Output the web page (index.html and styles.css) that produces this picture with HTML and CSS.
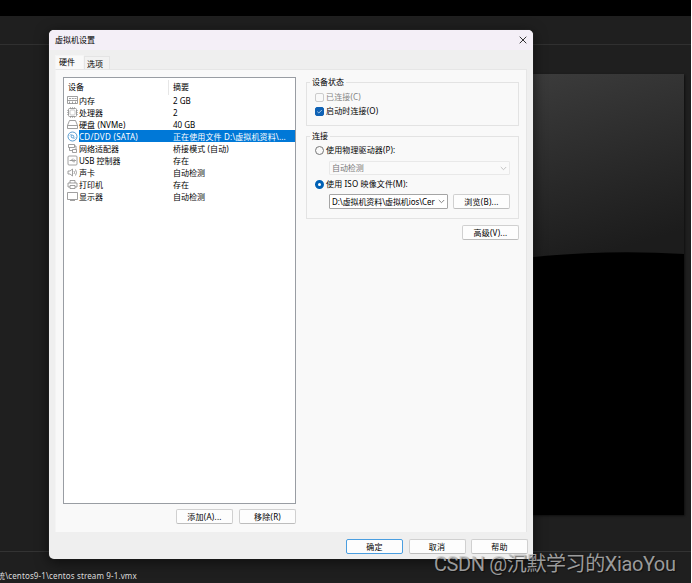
FILE: index.html
```html
<!DOCTYPE html>
<html lang="zh-CN">
<head>
<meta charset="utf-8">
<title>虚拟机设置</title>
<link rel="stylesheet" href="styles.css">
</head>
<body>
<div class="desktop">
  <div class="menubar"></div>
  <div class="toolbar"></div>
  <div class="workspace">
    <div class="preview">
      <svg width="160" height="442" viewBox="0 0 160 442">
        <defs><linearGradient id="sky" x1="0.1" y1="0" x2="0.35" y2="1"><stop offset="0" stop-color="#3b3b3b"/><stop offset="1" stop-color="#1c1c1c"/></linearGradient></defs>
        <rect width="160" height="186" fill="url(#sky)"/>
        <path d="M0 184Q80 175 160 180V442H0Z" fill="#000"/>
      </svg>
    </div>
  </div>
  <div class="statusbar"><span class="path">统\centos9-1\centos stream 9-1.vmx</span></div>
</div>

<div class="dialog">
  <div class="titlebar"><span class="title">虚拟机设置</span>
    <svg class="close" width="8" height="8" viewBox="0 0 8 8"><path d="M.7.7 7.3 7.3M7.3.7.7 7.3" stroke="#333" stroke-width="1"/></svg>
  </div>
  <div class="tabs"><div class="tab active">硬件</div><div class="tab">选项</div></div>
  <div class="panel">
    <div class="left">
      <div class="list">
        <div class="row head"><span class="name">设备</span><span class="value">摘要</span></div>
        <div class="row"><svg class="ico" viewBox="0 0 11 11"><path d="M.5 1.500h10v7H.5zM.5 5.500h10M2 3.500h2M4.800 3.500h2M7.500 3.500h2M2.500 6.500v2M5.500 6.500v2M8.500 6.500v2"/></svg><span class="name">内存</span><span class="value">2 GB</span></div>
        <div class="row"><svg class="ico" viewBox="0 0 11 11"><rect x="1.500" y="1.500" width="8" height="8" rx="1"/><rect x="3" y="3" width="5" height="5" rx="1" stroke="#bbb"/><path d="M3.500.3v1M5.500.3v1M7.500.3v1M3.500 9.700v1M5.500 9.700v1M7.500 9.700v1M.3 3.500h1M.3 5.500h1M.3 7.500h1M9.700 3.500h1M9.700 5.500h1M9.700 7.500h1"/></svg><span class="name">处理器</span><span class="value">2</span></div>
        <div class="row"><svg class="ico" viewBox="0 0 11 11"><path d="M2.500 1.500h6l2 5v3H.5v-3zM.5 6.500h10"/></svg><span class="name spaced">硬盘 (NVMe)</span><span class="value">40 GB</span></div>
        <div class="row selected"><svg class="ico disc" viewBox="0 0 11 11"><circle cx="5.500" cy="5.500" r="4.500"/><circle cx="5.500" cy="5.500" r="1.300"/><path d="M3 4.500 4.500 3M6.500 8 8 6.500"/></svg><span class="name wide">CD/DVD (SATA)</span><span class="value summary">正在使用文件 D:\虚拟机资料\...</span></div>
        <div class="row"><svg class="ico" viewBox="0 0 11 11"><path d="M1.500 1.500h6v3h-6zM5.500 6.500h4v3h-4zM2.500 4.500v3h3M7.500 3H9v3.500"/></svg><span class="name">网络适配器</span><span class="value spaced">桥接模式 (自动)</span></div>
        <div class="row"><svg class="ico" viewBox="0 0 11 11"><rect x="1" y="1" width="9" height="9" rx="1"/><path d="M2.500 5.500h6M4 5.500 5.500 4h1M5 5.500 6.500 7h1M7.500 4.500l1 1-1 1"/></svg><span class="name">USB 控制器</span><span class="value">存在</span></div>
        <div class="row"><svg class="ico" viewBox="0 0 11 11"><path d="M1 4h2l2.500-2v7L3 7H1zM7 4q1 1.500 0 3M8.500 2.500q2 3 0 6"/></svg><span class="name">声卡</span><span class="value">自动检测</span></div>
        <div class="row"><svg class="ico" viewBox="0 0 11 11"><path d="M3 4V1.500h5V4M3 8H1V4h9v4H8M3 6.500h5v3H3z"/></svg><span class="name">打印机</span><span class="value">存在</span></div>
        <div class="row"><svg class="ico" viewBox="0 0 11 11"><path d="M.5 1.500h10v7H.5zM3 9.500h5"/></svg><span class="name">显示器</span><span class="value">自动检测</span></div>
      </div>
      <div class="buttons"><div class="btn">添加(A)...</div><div class="btn">移除(R)</div></div>
    </div>
    <div class="right">
      <div class="group status"><span class="legend">设备状态</span>
        <div class="line off"><span class="check"></span><span>已连接(C)</span></div>
        <div class="line"><span class="check on"><svg width="7" height="7" viewBox="0 0 7 7"><path d="M1.300 3.600 2.800 5 5.800 2" stroke="#cfe3f6" fill="none" stroke-width=".8"/></svg></span><span>启动时连接(O)</span></div>
      </div>
      <div class="group conn"><span class="legend">连接</span>
        <div class="line"><span class="radio"></span><span>使用物理驱动器(P):</span></div>
        <div class="select disabled"><span class="text">自动检测</span><svg class="chev" viewBox="0 0 7 5"><path d="M.8 1 3.500 3.700 6.200 1"/></svg></div>
        <div class="line"><span class="radio on"></span><span>使用 ISO 映像文件(M):</span></div>
        <div class="file"><div class="select"><span class="text">D:\虚拟机资料\虚拟机ios\Cer</span><svg class="chev" viewBox="0 0 7 5"><path d="M.8 1 3.500 3.700 6.200 1"/></svg></div><div class="btn">浏览(B)...</div></div>
      </div>
      <div class="btn advanced">高级(V)...</div>
    </div>
  </div>
  <div class="footer"><div class="btn primary">确定</div><div class="btn">取消</div><div class="btn">帮助</div></div>
</div>
<div class="watermark">CSDN @沉默学习的XiaoYou</div>
</body>
</html>
```

FILE: styles.css
```css
* { box-sizing: border-box; }
body { margin: 0; width: 692px; height: 583px; overflow: hidden; position: relative; font: 8px/12px "Noto Sans", "Noto Sans CJK SC", sans-serif; color: #000; }
.desktop { width: 691px; height: 583px; display: flex; flex-direction: column; background: #1f1f1f; }
.menubar { height: 16px; background: #000; }
.toolbar { height: 29px; border-bottom: 1px solid #303030; }
.workspace { height: 507px; padding: 29px 7px 0 0; display: flex; justify-content: flex-end; border-bottom: 1px solid #333; }
.preview { width: 160px; height: 441px; overflow: hidden; box-shadow: 1px 1px 2px #0008; }
.preview svg { display: block; }
.statusbar { flex: 1; padding-top: 18px; color: #ddd; white-space: nowrap; }
.path { display: block; margin-left: -3px; letter-spacing: .13px; }
.dialog { position: absolute; left: 49px; top: 30px; width: 484px; height: 529px; border-radius: 5px; overflow: hidden; background: #efefef; box-shadow: 0 3px 14px #0009, 0 0 1px #777; display: flex; flex-direction: column; }
.titlebar { height: 20px; background: #f4eff7; display: flex; justify-content: space-between; align-items: center; padding: 0 6px; }
.close { display: block; }
.tabs { height: 19px; padding: 5px 0 0 6px; display: flex; align-items: flex-end; }
.tab { width: 26px; height: 13px; padding: 1px 0 0 2px; background: #f2f2f2; border: 1px solid #e4e4e4; border-bottom: 0; white-space: nowrap; }
.tab.active { width: 29px; height: 14px; padding: 0 0 0 3px; background: #f9f9f9; border-color: #f5f5f5; }
.panel { margin-left: 6px; width: 472px; height: 463px; background: #f9f9f9; border: 1px solid #e6e6e6; border-left-color: #f4f4f4; border-bottom: 0; display: flex; }
.left { width: 233px; margin: 7px 0 0 7px; }
.list { height: 427px; background: #fff; border: 1px solid #999da3; padding-top: 2px; }
.row { display: flex; align-items: center; height: 12px; padding-left: 3px; white-space: nowrap; }
.row .name { width: 94px; height: 12px; line-height: 13px; }
.row .value { flex: 1; height: 12px; line-height: 13px; }
.row.head { height: 14px; padding-left: 4px; }
.head .name { width: 101px; height: 15px; border-right: 1px solid #e6e6e6; line-height: 14px; }
.head .value { padding-left: 4px; height: 14px; line-height: 14px; }
.row .spaced { letter-spacing: .1px; }
.row .wide { letter-spacing: .3px; }
.row .summary { letter-spacing: .12px; }
.ico { width: 11px; height: 11px; fill: none; stroke: #888; stroke-width: .8; flex: none; margin-right: 1px; }
.disc { stroke: #2e83c4; }
.selected { color: #fff; }
.selected .name, .selected .value { background: #0078d7; }
.buttons { display: flex; justify-content: flex-end; gap: 6px; padding-top: 5px; }
.btn { width: 57px; height: 15px; border: 1px solid #d0d0d0; border-bottom-color: #bdbdbd; border-radius: 2px; background: #fdfdfd; text-align: center; line-height: 14px; letter-spacing: .25px; white-space: nowrap; }
.right { width: 213px; margin: 12px 0 0 10px; }
.group { border: 1px solid #e3e3e3; position: relative; }
.legend { position: absolute; left: 3px; top: -7px; padding: 0 2px; background: #f9f9f9; }
.status { height: 44px; padding: 8px 0 0 8px; }
.status .line + .line { margin-top: 2px; }
.conn { height: 83px; margin-top: 10px; padding: 7px 0 0 8px; }
.line { display: flex; align-items: center; height: 12px; gap: 2px; letter-spacing: .14px; white-space: nowrap; }
.off { color: #858585; }
.check { width: 9px; height: 9px; border: 1px solid #ccc; border-radius: 2px; }
.check.on { background: #0f62b5; border-color: #0f62b5; }
.check svg { display: block; }
.radio { width: 9px; height: 9px; border: 1px solid #777; border-radius: 50%; }
.radio.on { border: 3px solid #0061b5; background: #fff; }
.select { display: flex; align-items: center; justify-content: space-between; height: 15px; border: 1px solid #a5a5a5; border-radius: 1px; background: #fff; padding: 0 2px; white-space: nowrap; }
.select .text { width: 105px; letter-spacing: -.1px; }
.select.disabled { width: 181px; height: 14px; margin: 5px 0 3px 14px; color: #777; background: #fafafa; border-color: #e9e9e9; }
.chev { width: 7px; height: 5px; fill: none; stroke: #777; stroke-width: .9; }
.disabled .chev { stroke: #bbb; }
.file { display: flex; gap: 5px; margin: 4px 0 0 14px; }
.file .select { width: 119px; }
.advanced { margin: 6px 0 0 156px; }
.footer { display: flex; justify-content: flex-end; gap: 5.5px; padding: 7px 5px 0 0; }
.btn.primary { border-color: #4a9ee0; }
.watermark { position: absolute; left: 434px; top: 551px; font-size: 20px; line-height: 26px; font-family: Roboto, "Noto Sans CJK SC", sans-serif; font-weight: 400; letter-spacing: -.4px; color: #c8c8c8c0; text-shadow: 1px 1px 1px #0008; white-space: nowrap; }
```
